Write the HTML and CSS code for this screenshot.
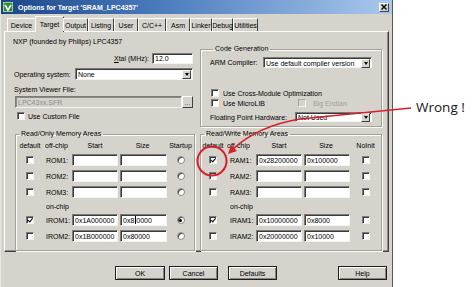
FILE: index.html
```html
<!DOCTYPE html>
<html>
<head>
<meta charset="utf-8">
<link rel="stylesheet" href="styles.css">
</head>
<body>
<div class="stage">
  <div class="dialog">
    <div class="titlebar">
      <svg class="appicon" width="10" height="10" viewBox="0 0 10 10"><rect x="0" y="0" width="10" height="10" fill="#2f8a35"/><rect x="0.5" y="0.5" width="9" height="9" fill="none" stroke="#9fd39a" stroke-width="1"/><path d="M2 3 L5 8 L8 3" stroke="#fff" stroke-width="1.6" fill="none"/></svg>
      <span class="title">Options for Target 'SRAM_LPC4357'</span>
      <span class="close"><svg width="6" height="6" viewBox="0 0 6 6"><path d="M0.5 0.5 L5.5 5.5 M5.5 0.5 L0.5 5.5" stroke="#000" stroke-width="1.4"/></svg></span>
    </div>
    <div class="tabs">
      <span class="tab w-device">Device</span>
      <span class="tab sel w-target">Target</span>
      <span class="tab w-output">Output</span>
      <span class="tab w-listing">Listing</span>
      <span class="tab w-user">User</span>
      <span class="tab w-cc">C/C++</span>
      <span class="tab w-asm">Asm</span>
      <span class="tab w-linker">Linker</span>
      <span class="tab w-debug">Debug</span>
      <span class="tab w-util">Utilities</span>
    </div>
    <div class="panel">
      <div class="topleft">
        <div class="nxp">NXP (founded by Philips) LPC4357</div>
        <div class="xtal"><span><u>X</u>tal (MHz):</span><span class="field w41">12.0</span></div>
        <div class="os"><span>Operating system:</span><span class="select w118"><span class="sval">None</span><span class="dd"></span></span></div>
        <div class="svf">System Viewer File:</div>
        <div class="svfrow"><span class="field dis w167">LPC43xx.SFR</span><span class="dots">...</span></div>
        <div class="custom"><span class="cb"></span><span>Use Custom File</span></div>
      </div>
      <fieldset class="grp codegen">
        <legend>Code Generation</legend>
        <div class="armrow"><span>ARM Compiler:</span><span class="select w109"><span class="sval">Use default compiler version</span><span class="dd"></span></span></div>
        <div class="chkrow cross"><span class="cb"></span><span>Use Cross-Module Optimization</span></div>
        <div class="chkrow micro"><span class="mlib"><span class="cb"></span><span>Use MicroLIB</span></span><span class="cb dis"></span><span class="disl">Big Endian</span></div>
        <div class="fprow"><span>Floating Point Hardware:</span><span class="select w77"><span class="sval">Not Used</span><span class="dd"></span></span></div>
      </fieldset>
      <fieldset class="grp mem ro">
        <legend>Read/Only Memory Areas</legend>
        <div class="memgrid rogrid">
          <span class="hc">default</span><span class="hl">off-chip</span><span class="hc">Start</span><span class="hc">Size</span><span class="hc">Startup</span>
          <span class="cc"><span class="cb"></span></span><span class="lbl">ROM1:</span><span class="field"></span><span class="field"></span><span class="cc"><span class="rb"></span></span>
          <span class="cc"><span class="cb"></span></span><span class="lbl">ROM2:</span><span class="field"></span><span class="field"></span><span class="cc"><span class="rb"></span></span>
          <span class="cc"><span class="cb"></span></span><span class="lbl">ROM3:</span><span class="field"></span><span class="field"></span><span class="cc"><span class="rb"></span></span>
          <span></span><span class="onchip">on-chip</span>
          <span class="cc"><span class="cb on"></span></span><span class="lbl">IROM1:</span><span class="field">0x1A000000</span><span class="field">0x8<span class="caret"></span>0000</span><span class="cc"><span class="rb on"></span></span>
          <span class="cc"><span class="cb"></span></span><span class="lbl">IROM2:</span><span class="field">0x1B000000</span><span class="field">0x80000</span><span class="cc"><span class="rb"></span></span>
        </div>
      </fieldset>
      <fieldset class="grp mem rw">
        <legend>Read/Write Memory Areas</legend>
        <div class="memgrid rwgrid">
          <span class="hc">default</span><span class="hl">off-chip</span><span class="hc">Start</span><span class="hc">Size</span><span class="hc">NoInit</span>
          <span class="cc"><span class="cb on"></span></span><span class="lbl">RAM1:</span><span class="field">0x28200000</span><span class="field">0x100000</span><span class="cc"><span class="cb"></span></span>
          <span class="cc"><span class="cb"></span></span><span class="lbl">RAM2:</span><span class="field"></span><span class="field"></span><span class="cc"><span class="cb"></span></span>
          <span class="cc"><span class="cb"></span></span><span class="lbl">RAM3:</span><span class="field"></span><span class="field"></span><span class="cc"><span class="cb"></span></span>
          <span></span><span class="onchip">on-chip</span>
          <span class="cc"><span class="cb on"></span></span><span class="lbl">IRAM1:</span><span class="field">0x10000000</span><span class="field">0x8000</span><span class="cc"><span class="cb"></span></span>
          <span class="cc"><span class="cb"></span></span><span class="lbl">IRAM2:</span><span class="field">0x20000000</span><span class="field">0x10000</span><span class="cc"><span class="cb"></span></span>
        </div>
      </fieldset>
    </div>
    <div class="buttons">
      <span class="btn b-ok">OK</span>
      <span class="btn b-cancel">Cancel</span>
      <span class="btn b-def">Defaults</span>
      <span class="btn b-help">Help</span>
    </div>
  </div>
  <div class="note">Wrong !</div>
  <svg class="annot" width="474" height="287" viewBox="0 0 474 287">
    <circle cx="212" cy="161" r="14.5" fill="none" stroke="#d8202a" stroke-width="2"/>
    <path d="M411 108 L300 119 Q258 126 233 149" fill="none" stroke="#d8202a" stroke-width="1.5"/>
    <path d="M228 154 L231 145 L237 151 Z" fill="#d8202a"/>
  </svg>
</div>
</body>
</html>
```
FILE: styles.css
```css
html, body {
  margin: 0;
  padding: 0;
  background: #fff;
}
body {
  width: 474px;
  height: 287px;
  overflow: hidden;
  font-family: "Liberation Sans", Arial, sans-serif;
  font-size: 7px;
  color: #000;
}
.stage {
  position: relative;
  width: 474px;
  height: 287px;
  display: flex;
}
.dialog {
  width: 393px;
  height: 287px;
  box-sizing: border-box;
  background: #d6d3cd;
  border-right: 1px solid #5a5a5a;
  border-left: 1px solid #e9e7e3;
  display: flex;
  flex-direction: column;
}
.titlebar {
  height: 14px;
  display: flex;
  align-items: center;
  padding: 0 2px 0 2px;
  background: linear-gradient(90deg, #1b4589 0%, #4a7bbd 40%, #a9c8ec 100%);
}
.appicon { margin-right: 5px; flex: none; }
.title {
  color: #fff;
  font-weight: bold;
  font-size: 7px;
  flex: 1;
}
.close {
  width: 10px;
  height: 9px;
  box-sizing: border-box;
  background: #d6d3cd;
  border: 1px solid;
  border-color: #fff #404040 #404040 #fff;
  display: flex;
  align-items: center;
  justify-content: center;
  margin-right: 1px;
}
.tabs {
  margin-top: 2px;
  height: 15px;
  display: flex;
  align-items: flex-end;
  padding-left: 6px;
  position: relative;
  z-index: 1;
}
.tab {
  height: 13px;
  box-sizing: border-box;
  border-top: 1px solid #fff;
  border-left: 1px solid #fff;
  border-right: 1px solid #404040;
  border-radius: 1px 1px 0 0;
  display: flex;
  align-items: center;
  justify-content: center;
  white-space: nowrap;
}
.tab.sel {
  height: 16px;
  margin: 0 -1px -1px -1px;
  background: #d6d3cd;
  padding-bottom: 1px;
}
.w-device { width: 29px; }
.w-target { width: 29px; }
.w-output { width: 25px; }
.w-listing { width: 26px; }
.w-user { width: 24px; }
.w-cc { width: 28px; }
.w-asm { width: 24px; }
.w-linker { width: 22px; }
.w-debug { width: 21px; }
.w-util { width: 25px; }

.panel {
  margin-left: 3px;
  width: 385px;
  height: 221px;
  box-sizing: border-box;
  border: 1px solid;
  border-color: #fff #404040 #404040 #fff;
  box-shadow: inset -1px -1px 0 #8c8a85;
  padding: 5px 0 0 8px;
  display: grid;
  grid-template-columns: 182px 182px;
  grid-template-rows: 92px auto;
  column-gap: 5px;
}
.topleft { display: flex; flex-direction: column; }
.nxp { line-height: 10px; height: 10px; }
.xtal {
  margin-top: 6px;
  height: 11px;
  display: flex;
  justify-content: flex-end;
  align-items: center;
  gap: 3px;
  padding-right: 2px;
}
.os {
  margin-top: 4px;
  height: 12px;
  display: flex;
  justify-content: space-between;
  align-items: center;
  padding: 0 2px 0 1px;
}
.svf { margin-top: 5px; line-height: 10px; padding-left: 1px; }
.svfrow {
  margin-top: 1px;
  height: 12px;
  display: flex;
  padding-left: 2px;
}
.custom {
  margin-top: 4px;
  height: 8px;
  display: flex;
  align-items: center;
  gap: 3px;
  padding-left: 4px;
}

.field {
  height: 12px;
  box-sizing: border-box;
  background: #fff;
  border: 1px solid;
  border-color: #7d7b77 #f4f3f1 #f4f3f1 #7d7b77;
  box-shadow: inset 1px 1px 0 #3a3a3a;
  display: flex;
  align-items: center;
  padding-left: 2px;
  white-space: nowrap;
  overflow: hidden;
}
.xtal .field { height: 11px; }
.field.dis {
  background: #d6d3cd;
  color: #8d8b87;
  box-shadow: inset 1px 1px 0 #8d8b87;
}
.w41 { width: 41px; }
.w167 { width: 167px; }
.w118 { width: 118px; }
.w109 { width: 109px; }
.w77 { width: 77px; }
.dots {
  width: 11px;
  height: 12px;
  box-sizing: border-box;
  border: 1px solid;
  border-color: #fff #404040 #404040 #fff;
  display: flex;
  align-items: flex-end;
  justify-content: center;
  line-height: 8px;
  color: #555;
}
.select {
  height: 12px;
  box-sizing: border-box;
  background: #fff;
  border: 1px solid;
  border-color: #7d7b77 #f4f3f1 #f4f3f1 #7d7b77;
  box-shadow: inset 1px 1px 0 #3a3a3a;
  display: flex;
  align-items: center;
  padding: 1px 1px 0 2px;
}
.sval { flex: 1; white-space: nowrap; overflow: hidden; }
.dd {
  width: 9px;
  height: 9px;
  box-sizing: border-box;
  background: #d6d3cd;
  border: 1px solid;
  border-color: #fff #404040 #404040 #fff;
  display: flex;
  align-items: center;
  justify-content: center;
}
.dd::after {
  content: "";
  border-style: solid;
  border-width: 3px 2.5px 0 2.5px;
  border-color: #000 transparent transparent transparent;
}

.cb {
  position: relative;
  width: 8px;
  height: 8px;
  box-sizing: border-box;
  background: #fff;
  border: 1px solid;
  border-color: #7d7b77 #f4f3f1 #f4f3f1 #7d7b77;
  box-shadow: inset 1px 1px 0 #3a3a3a;
  flex: none;
}
.cb.on::after {
  content: "";
  position: absolute;
  left: 2px;
  top: 0px;
  width: 1.5px;
  height: 3.5px;
  border: solid #000;
  border-width: 0 1.3px 1.3px 0;
  transform: rotate(40deg);
}
.cb.dis {
  background: #d6d3cd;
  border-color: #a8a6a2 #f4f3f1 #f4f3f1 #a8a6a2;
  box-shadow: none;
}
.disl { color: #a3a19d; margin-left: 3px; }
.rb {
  position: relative;
  width: 8px;
  height: 8px;
  box-sizing: border-box;
  border-radius: 50%;
  background: #fff;
  border: 1px solid #8a8884;
  box-shadow: inset 1px 1px 0 #3a3a3a;
}
.rb.on::after {
  content: "";
  position: absolute;
  left: 1.5px;
  top: 1.5px;
  width: 3px;
  height: 3px;
  border-radius: 50%;
  background: #000;
}

.grp {
  margin: 0;
  padding: 0;
  min-width: 0;
  border: 1px solid #a3a09a;
  box-shadow: inset 1px 1px 0 #fbfbfa, 1px 1px 0 #fbfbfa;
}
.grp legend {
  padding: 0 2px;
  margin-left: 3px;
  line-height: 10px;
  height: 10px;
}
.codegen {
  margin-top: 7px;
  align-self: start;
  padding: 3px 0 4px 9px;
}
.armrow {
  height: 11px;
  display: flex;
  align-items: center;
  justify-content: space-between;
  padding-right: 9px;
}
.armrow .select { height: 11px; }
.chkrow {
  height: 8px;
  display: flex;
  align-items: center;
  padding-left: 1px;
}
.chkrow .cb { margin-right: 4px; }
.cross { margin-top: 21px; }
.micro { margin-top: 2px; }
.mlib { width: 87px; display: flex; align-items: center; }
.fprow {
  margin-top: 5px;
  height: 10px;
  display: flex;
  align-items: center;
  justify-content: space-between;
  padding-right: 9px;
}
.fprow .select { height: 10px; }

.mem { padding: 1px 0 2px 0; }
.ro { margin-left: 2px; width: 180px; box-sizing: border-box; }
.rw { width: 182px; box-sizing: border-box; }
.memgrid {
  display: grid;
  grid-template-rows: 10px 12px 12px 12px 8px 12px 12px;
  row-gap: 4px;
}
.memgrid .field + .field { margin-left: 2px; }
.rogrid { grid-template-columns: 28px 28px 46px 49px 27px; }
.rwgrid { grid-template-columns: 24px 31px 46px 48px 31px; }
.hc { display: flex; align-items: center; justify-content: center; }
.hl { display: flex; align-items: center; padding-left: 1px; }
.rwgrid .hl { padding-left: 2px; }
.cc { display: flex; align-items: center; justify-content: center; }
.lbl { display: flex; align-items: center; padding-left: 2px; }
.rwgrid .lbl { padding-left: 5px; }
.onchip { display: flex; align-items: center; padding-left: 2px; grid-column: span 4; }
.rwgrid .onchip { padding-left: 5px; }
.caret {
  display: inline-block;
  width: 0;
  height: 8px;
  border-left: 1px solid #000;
  margin: 0 0.5px;
}

.buttons {
  margin-top: 14px;
  height: 14px;
  display: flex;
  padding-left: 114px;
}
.btn {
  width: 49px;
  height: 14px;
  box-sizing: border-box;
  border: 1px solid #1e1e1e;
  box-shadow: inset 1px 1px 0 #fff, inset -1px -1px 0 #85837e;
  display: flex;
  align-items: center;
  justify-content: center;
}
.b-ok { width: 50px; }
.b-cancel { margin-left: 4px; }
.b-def { margin-left: 10px; }
.b-help { margin-left: 61px; }

.note {
  position: absolute;
  left: 416px;
  top: 101px;
  font-family: "Open Sans", "Liberation Sans", sans-serif;
  font-size: 13.5px;
  line-height: 13.5px;
  color: #151515;
}
.annot {
  position: absolute;
  left: 0;
  top: 0;
  pointer-events: none;
}
```
